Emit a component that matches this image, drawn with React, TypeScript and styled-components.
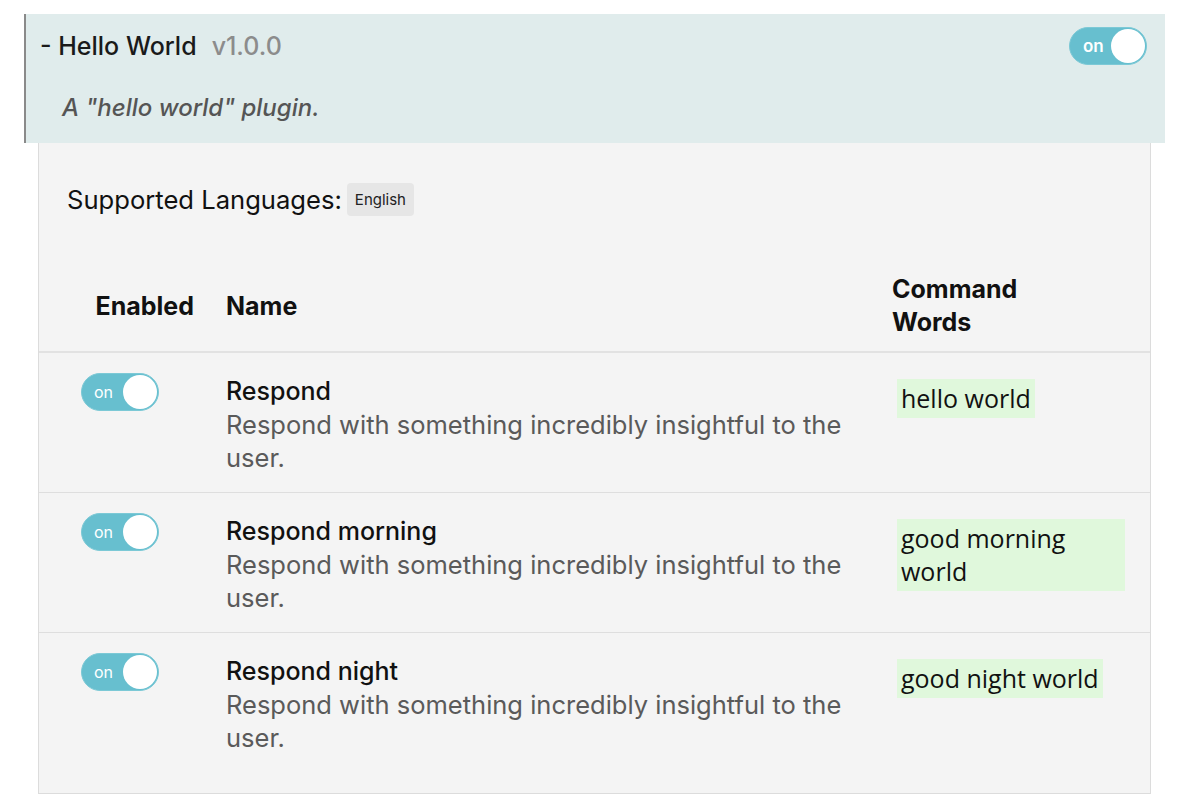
import * as React from 'react';
import styled, { createGlobalStyle } from 'styled-components';

const GlobalStyle = createGlobalStyle`
    body {
        margin: 0;
        background: #ffffff;
        font-family: Inter, Roboto, "Liberation Sans", sans-serif;
        color: #111;
    }
`;

interface ICommand {
    name: string;
    description: string;
    words: string;
}

const commands: ICommand[] = [
    {
        name: 'Respond',
        description: 'Respond with something incredibly insightful to the user.',
        words: 'hello world',
    },
    {
        name: 'Respond morning',
        description: 'Respond with something incredibly insightful to the user.',
        words: 'good morning world',
    },
    {
        name: 'Respond night',
        description: 'Respond with something incredibly insightful to the user.',
        words: 'good night world',
    },
];

const Wrapper = styled.div`
    margin: 14px 35px 0 24px;
`;

const PluginHeader = styled.div`
    background: #e0ecec;
    border-left: 2px solid #8a8a8a;
    padding: 13px 18px 19px 14px;
`;

const TitleRow = styled.div`
    display: flex;
    align-items: center;
    justify-content: space-between;
    height: 38px;
`;

const Title = styled.div`
    font-size: 25px;
    font-weight: 450;
    color: #1a1a1a;
`;

const Version = styled.span`
    color: #8c8c8c;
    margin-left: 15px;
`;

const Description = styled.div`
    margin-top: 26px;
    padding-left: 22px;
    line-height: 33px;
    font-size: 24px;
    font-style: italic;
    font-weight: 500;
    color: #555;
`;

const SwitchTrack = styled.div`
    position: relative;
    width: 78px;
    height: 38px;
    box-sizing: border-box;
    border-radius: 19px;
    background: #67bfcf;
    border: 1px solid #7cc9d6;
    flex-shrink: 0;
`;

const SwitchLabel = styled.span<{ $large?: boolean }>`
    position: absolute;
    left: ${props => props.$large ? 13 : 12}px;
    top: 0;
    line-height: 36px;
    color: #fff;
    font-size: ${props => props.$large ? 17 : 16}px;
    font-weight: ${props => props.$large ? 600 : 400};
`;

const SwitchKnob = styled.span`
    position: absolute;
    right: 1px;
    top: 1px;
    width: 34px;
    height: 34px;
    border-radius: 50%;
    background: #fff;
`;

const Switch: React.FC<{ large?: boolean }> = ({ large }) => (
    <SwitchTrack>
        <SwitchLabel $large={large}>on</SwitchLabel>
        <SwitchKnob />
    </SwitchTrack>
);

const Panel = styled.div`
    margin: 0 14px;
    background: #f4f4f4;
    border: 1px solid #dcdcdc;
    border-top: none;
    padding: 40px 0 21px;
`;

const Languages = styled.div`
    display: flex;
    align-items: center;
    padding-left: 28px;
    font-size: 25.6px;
    line-height: 33px;
`;

const LanguageBadge = styled.span`
    margin-left: 5px;
    padding: 0 8px;
    background: #e6e6e6;
    border-radius: 4px;
    font-size: 15px;
    line-height: 33px;
    color: #222;
`;

const Grid = styled.div`
    display: grid;
    grid-template-columns: 171px 666px 1fr;
    margin-top: 45px;
`;

const HeadCell = styled.div<{ $align?: string }>`
    display: flex;
    align-items: center;
    justify-content: ${props => props.$align === 'right' ? 'flex-end' : 'flex-start'};
    padding: 12px 16px;
    font-size: 25px;
    font-weight: 700;
    line-height: 33px;
    border-bottom: 2px solid #e2e2e2;
`;

const Cell = styled.div<{ $last?: boolean }>`
    padding: 22px 16px 18px;
    border-bottom: ${props => props.$last ? 'none' : '1px solid #dedede'};
`;

const SwitchCell = styled(Cell)`
    padding-top: 20px;
    padding-left: 42px;
`;

const WordsCell = styled(Cell)`
    padding-top: 26px;
    padding-left: 21px;
    padding-right: 25px;
`;

const CommandName = styled.div`
    font-size: 25px;
    font-weight: 500;
    line-height: 33px;
    color: #111;
`;

const CommandDescription = styled.div`
    font-size: 25.5px;
    line-height: 33px;
    color: #5a5a5a;
`;

const CommandWord = styled.span`
    display: inline-block;
    padding: 3px 4px;
    background: #e0f8dc;
    font-family: "Open Sans", "Noto Sans", sans-serif;
    font-size: 25px;
    line-height: 33px;
    color: #111;
`;

export default function App() {
    return (
        <Wrapper>
            <GlobalStyle />
            <PluginHeader>
                <TitleRow>
                    <Title>
                        - Hello World<Version>v1.0.0</Version>
                    </Title>
                    <Switch large />
                </TitleRow>
                <Description>A "hello world" plugin.</Description>
            </PluginHeader>
            <Panel>
                <Languages>
                    Supported Languages:
                    <LanguageBadge>English</LanguageBadge>
                </Languages>
                <Grid>
                    <HeadCell $align="right">Enabled</HeadCell>
                    <HeadCell>Name</HeadCell>
                    <HeadCell>Command<br />Words</HeadCell>
                    {commands.map((command, i) => {
                        const last = i === commands.length - 1;
                        return (
                            <React.Fragment key={command.name}>
                                <SwitchCell $last={last}>
                                    <Switch />
                                </SwitchCell>
                                <Cell $last={last}>
                                    <CommandName>{command.name}</CommandName>
                                    <CommandDescription>{command.description}</CommandDescription>
                                </Cell>
                                <WordsCell $last={last}>
                                    <CommandWord>{command.words}</CommandWord>
                                </WordsCell>
                            </React.Fragment>
                        );
                    })}
                </Grid>
            </Panel>
        </Wrapper>
    );
}
